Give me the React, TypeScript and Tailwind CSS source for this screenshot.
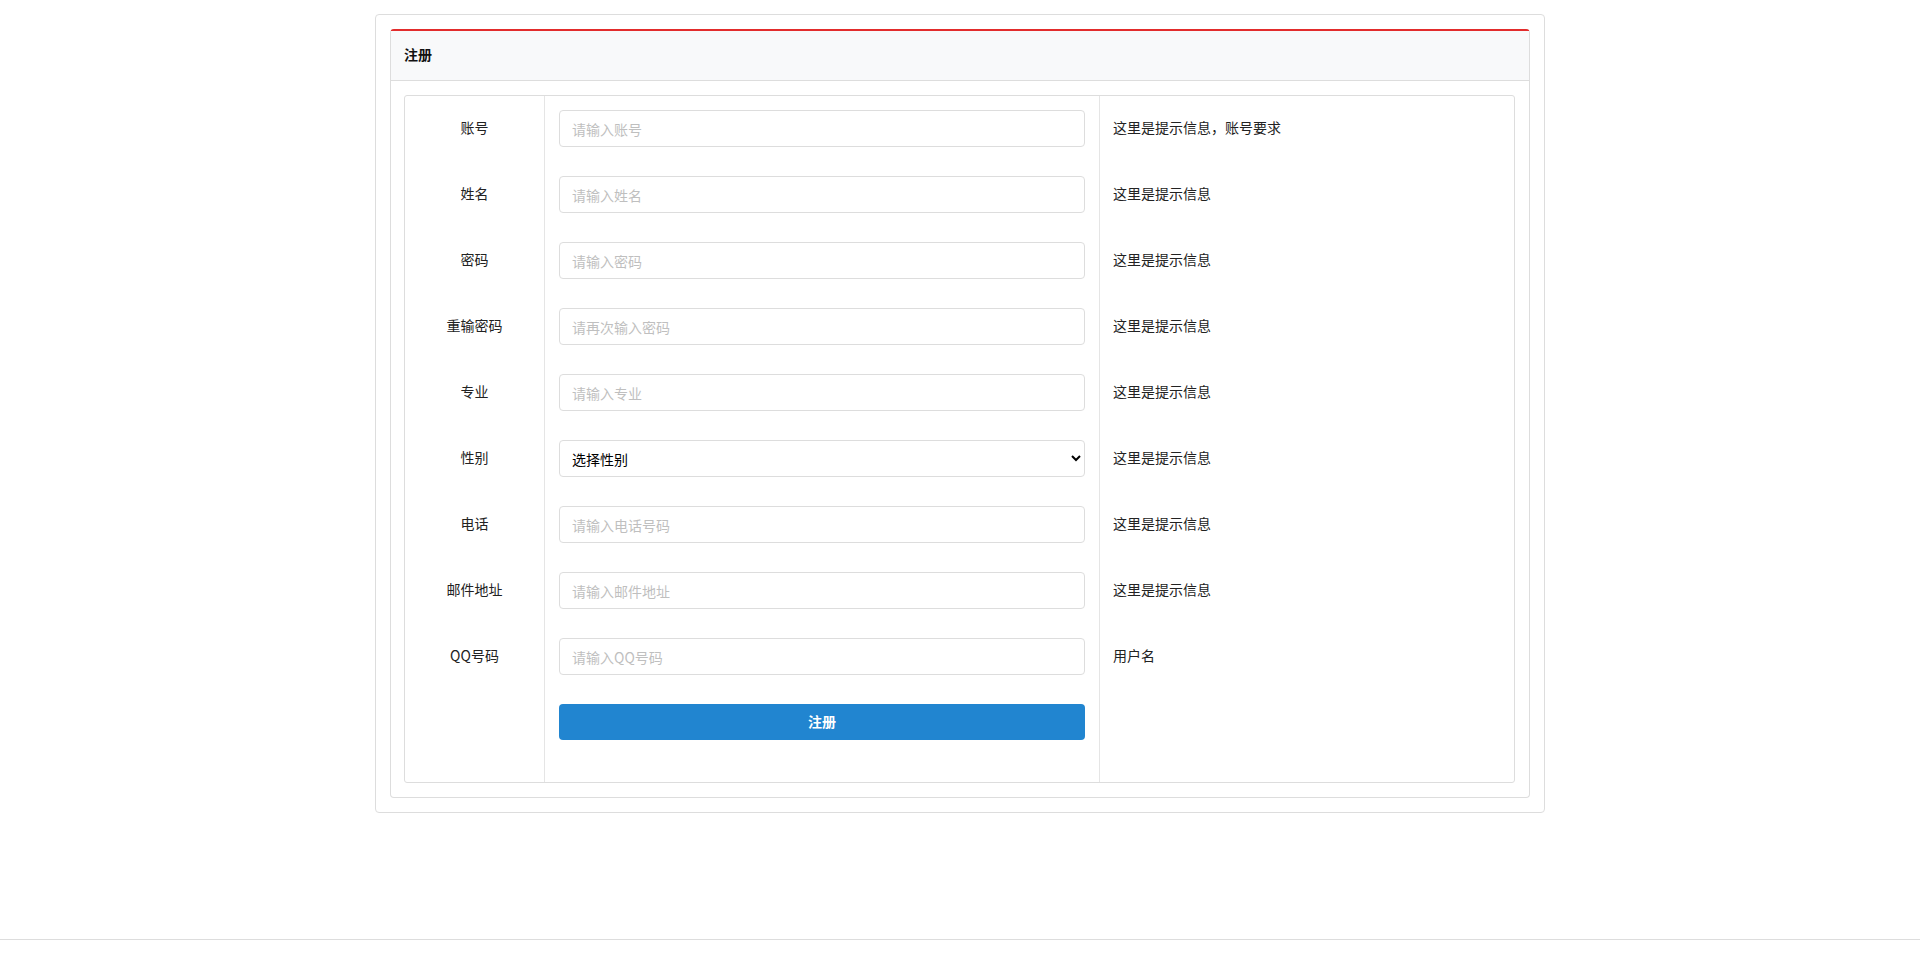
const fields = [
  { label: "账号", placeholder: "请输入账号", hint: "这里是提示信息，账号要求" },
  { label: "姓名", placeholder: "请输入姓名", hint: "这里是提示信息" },
  { label: "密码", placeholder: "请输入密码", hint: "这里是提示信息", type: "password" },
  { label: "重输密码", placeholder: "请再次输入密码", hint: "这里是提示信息", type: "password" },
  { label: "专业", placeholder: "请输入专业", hint: "这里是提示信息" },
  { label: "性别", placeholder: "", hint: "这里是提示信息", select: true },
  { label: "电话", placeholder: "请输入电话号码", hint: "这里是提示信息" },
  { label: "邮件地址", placeholder: "请输入邮件地址", hint: "这里是提示信息" },
  { label: "QQ号码", placeholder: "请输入QQ号码", hint: "用户名" },
];

export default function App() {
  return (
    <div className="min-h-screen bg-white pt-[14px] font-['Noto_Sans_CJK_SC',sans-serif] text-[14px] text-[#222]">
      <div className="mx-auto w-[1170px] rounded-[4px] border border-[#ddd] p-[14px]">
        <div className="rounded-[4px] border border-[#ddd] border-t-2 border-t-[#e22c2c]">
          <div className="flex h-[50px] items-center border-b border-[#ddd] bg-[#f8f9fa] pb-[2px] pl-[13px] font-bold text-[#111]">
            注册
          </div>
          <div className="p-[14px] pl-[13px]">
            <div className="flex rounded-[3px] border border-[#ddd]">
              {/* labels */}
              <div className="w-[140px] border-r border-[#e5e5e5] pb-[12px] pt-[14px]">
                {fields.map((f) => (
                  <div key={f.label} className="h-[66px]">
                    <div className="flex h-[37px] items-center justify-center pb-[2px]">{f.label}</div>
                  </div>
                ))}
                <div className="h-[66px]" />
              </div>

              {/* inputs */}
              <div className="w-[555px] border-r border-[#e5e5e5] px-[14px] pb-[12px] pt-[14px]">
                {fields.map((f) =>
                  f.select ? (
                    <div key={f.label} className="h-[66px]">
                      <select className="h-[37px] w-full rounded-[4px] border border-[#ddd] bg-white pl-[8px] pr-[6px] text-[14px] text-black outline-none">
                        <option>选择性别</option>
                        <option>男</option>
                        <option>女</option>
                      </select>
                    </div>
                  ) : (
                    <div key={f.label} className="h-[66px]">
                      <input
                        type={f.type ?? "text"}
                        placeholder={f.placeholder}
                        className="h-[37px] w-full rounded-[4px] border border-[#ddd] px-[12px] text-[14px] text-[#333] outline-none placeholder:text-[#bfbfbf]"
                      />
                    </div>
                  )
                )}
                <div className="h-[66px]">
                  <button className="h-[36px] w-full rounded-[4px] bg-[#2185d0] pb-[2px] font-bold text-white">
                    注册
                  </button>
                </div>
              </div>

              {/* hints */}
              <div className="flex-1 pb-[12px] pl-[13px] pt-[14px]">
                {fields.map((f) => (
                  <div key={f.label} className="h-[66px]">
                    <div className="flex h-[37px] items-center pb-[2px]">{f.hint}</div>
                  </div>
                ))}
                <div className="h-[66px]" />
              </div>
            </div>
          </div>
        </div>
      </div>
      <div className="mt-[126px] border-t border-[#ddd]" />
    </div>
  );
}
